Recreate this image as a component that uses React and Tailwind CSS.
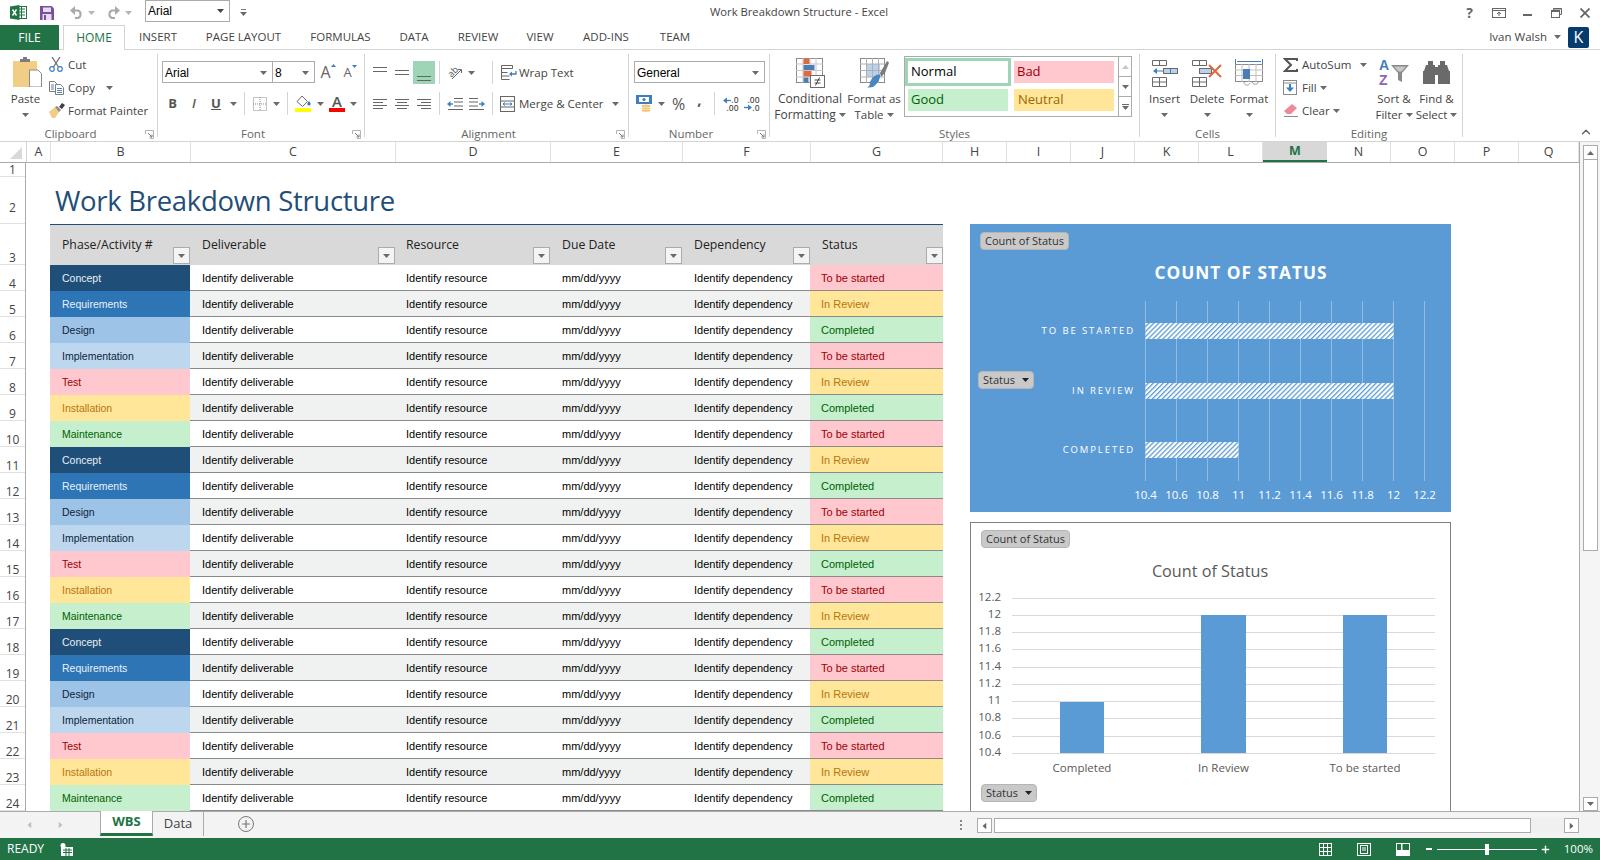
import { ChevronUp, Plus } from 'lucide-react';

const UI = "font-['Open_Sans',sans-serif]";
const ARIAL = "font-['Liberation_Sans',Arial,sans-serif]";

const COLUMNS = [
  { name: 'A', cls: 'w-[24px]' },
  { name: 'B', cls: 'w-[140px]' },
  { name: 'C', cls: 'w-[205px]' },
  { name: 'D', cls: 'w-[155px]' },
  { name: 'E', cls: 'w-[132px]' },
  { name: 'F', cls: 'w-[128px]' },
  { name: 'G', cls: 'w-[132px]' },
  { name: 'H', cls: 'w-[64px]' },
  { name: 'I', cls: 'w-[64px]' },
  { name: 'J', cls: 'w-[64px]' },
  { name: 'K', cls: 'w-[64px]' },
  { name: 'L', cls: 'w-[64px]' },
  { name: 'M', cls: 'w-[64px]', active: true },
  { name: 'N', cls: 'w-[64px]' },
  { name: 'O', cls: 'w-[64px]' },
  { name: 'P', cls: 'w-[64px]' },
  { name: 'Q', cls: 'w-[60px]' },
];

const PHASES = [
  { name: 'Concept', cls: 'bg-[#1f4e79] text-[#e8eef4]' },
  { name: 'Requirements', cls: 'bg-[#2e75b6] text-[#e8f0f8]' },
  { name: 'Design', cls: 'bg-[#9dc3e6] text-[#10243a]' },
  { name: 'Implementation', cls: 'bg-[#bdd7ee] text-[#10243a]' },
  { name: 'Test', cls: 'bg-[#ffc7ce] text-[#9c0006]' },
  { name: 'Installation', cls: 'bg-[#ffe699] text-[#b7750f]' },
  { name: 'Maintenance', cls: 'bg-[#c6efce] text-[#006100]' },
];

const STATUSES = [
  { name: 'To be started', cls: 'bg-[#ffc7ce] text-[#9c0006]' },
  { name: 'In Review', cls: 'bg-[#ffe699] text-[#b7750f]' },
  { name: 'Completed', cls: 'bg-[#c6efce] text-[#006100]' },
];

const HEADERS = [
  { name: 'Phase/Activity #', cls: 'pl-[12px]' },
  { name: 'Deliverable', cls: 'pl-[12px]' },
  { name: 'Resource', cls: 'pl-[11px]' },
  { name: 'Due Date', cls: 'pl-[12px]' },
  { name: 'Dependency', cls: 'pl-[12px]' },
  { name: 'Status', cls: 'pl-[12px]' },
];
const TABLE_GRID = 'grid grid-cols-[140px_205px_155px_132px_128px_133px]';

const ROW_NUMBERS = [
  { n: 1, cls: 'h-[14px]' },
  { n: 2, cls: 'h-[47px] pb-[9px]' },
  { n: 3, cls: 'h-[41px]' },
  ...Array.from({ length: 21 }, (_, i) => ({ n: i + 4, cls: 'h-[26px]' })),
];

const TABS = [
  { name: 'INSERT', cls: 'w-[66px]' },
  { name: 'PAGE LAYOUT', cls: 'w-[105px]' },
  { name: 'FORMULAS', cls: 'w-[89px]' },
  { name: 'DATA', cls: 'w-[58px]' },
  { name: 'REVIEW', cls: 'w-[70px]' },
  { name: 'VIEW', cls: 'w-[54px]' },
  { name: 'ADD-INS', cls: 'w-[78px]' },
  { name: 'TEAM', cls: 'w-[60px]' },
];

function Caret({ className = 'text-[#6a6a6a]' }) {
  return (
    <svg width="7" height="4" viewBox="0 0 7 4" className={className}>
      <path d="M0 0h7L3.5 4z" fill="currentColor" />
    </svg>
  );
}

function Slot({ cls, children }) {
  return <div className={`flex items-center justify-center h-full shrink-0 ${cls}`}>{children}</div>;
}

function VSep() {
  return <div className="w-px h-[23px] bg-[#d4d4d4]" />;
}

function Launcher() {
  return (
    <svg width="9" height="9" viewBox="0 0 9 9" fill="none" stroke="#7a7a7a">
      <path d="M.5 4V.5H8.5V8.5H5" stroke="#b5b5b5" />
      <path d="M3 3l4 4M7 4.5V7H4.5" />
    </svg>
  );
}

function Group({ cls, label, launcher, children }) {
  return (
    <div className={`flex flex-col h-[92px] shrink-0 ${cls}`}>
      <div className="h-[77px] shrink-0">{children}</div>
      <div className="flex items-center h-[14px]">
        <div className="flex-1 text-center text-[11.5px] leading-[14px] text-[#666]">{label}</div>
        {launcher && <div className="w-[16px] flex justify-center"><Launcher /></div>}
      </div>
    </div>
  );
}

function GroupSep() {
  return <div className="w-px h-[83px] mt-[4px] bg-[#d4d4d4] shrink-0" />;
}

function SmallBtn({ icon, label, caret, caretCls = 'ml-[5px]' }) {
  return (
    <div className="flex items-center h-[23px] text-[11.5px] text-[#444]">
      <div className="w-[19px] flex items-center">{icon}</div>
      <span>{label}</span>
      {caret && <span className={`flex ${caretCls}`}><Caret /></span>}
    </div>
  );
}

function BigBtn({ cls, icon, line1, line2, caret, text = 'text-[11.5px]' }) {
  return (
    <div className={`flex flex-col items-center pt-[8px] shrink-0 text-[#444] ${text} ${cls}`}>
      <div className="h-[30px] flex items-center justify-center">{icon}</div>
      <div className="mt-[3px] h-[16px] leading-[16px] whitespace-nowrap">{line1}</div>
      <div className="h-[16px] leading-[16px] whitespace-nowrap flex items-center gap-[3px]">
        {line2 && <span>{line2}</span>}
        {caret && <Caret />}
      </div>
    </div>
  );
}

function Combo({ cls, text }) {
  return (
    <div className={`flex items-center justify-between h-[22px] bg-white border border-[#ababab] pl-[2px] pr-[5px] pt-[1px] ${ARIAL} text-[12px] text-black ${cls}`}>
      <span>{text}</span>
      <Caret />
    </div>
  );
}

function Lines({ rows }) {
  return (
    <svg width="16" height="14" viewBox="0 0 16 14" stroke="#666" strokeWidth="1">
      {rows.map(([y, x1, x2]) => (
        <line key={y} x1={x1} x2={x2} y1={y + 0.5} y2={y + 0.5} />
      ))}
    </svg>
  );
}

// ---- title bar icons
function ExcelLogo() {
  return (
    <svg width="17" height="15" viewBox="0 0 17 15">
      <rect x="6" y="1.5" width="10.5" height="12" fill="#fff" stroke="#217346" />
      <path d="M9 4h6M9 7h6M9 10h6M11.5 2v11" stroke="#217346" />
      <path d="M0 1.5L9.5 0v15L0 13.5z" fill="#217346" />
      <path d="M2.5 4.5l4 6M6.5 4.5l-4 6" stroke="#fff" strokeWidth="1.4" />
    </svg>
  );
}

function SaveIcon() {
  return (
    <svg width="14" height="14" viewBox="0 0 14 14">
      <path d="M0 0h11.5L14 2.5V14H0z" fill="#7a4d9f" />
      <rect x="3" y="1.5" width="8" height="4.5" fill="#e6dcef" />
      <rect x="2.5" y="8" width="9" height="6" fill="#e6dcef" />
      <rect x="4" y="9" width="2" height="5" fill="#7a4d9f" />
    </svg>
  );
}

function UndoIcon({ flip }) {
  return (
    <svg width="15" height="13" viewBox="0 0 15 13" fill="none" className={flip ? '-scale-x-100' : ''}>
      <path d="M3 4.5h6a4 4 0 0 1 0 7.5H6" stroke="#a9a9a9" strokeWidth="2" />
      <path d="M6 0L1 4.5 6 9z" fill="#a9a9a9" />
    </svg>
  );
}

// ---- clipboard icons
function PasteIcon() {
  return (
    <svg width="29" height="30" viewBox="0 0 29 30">
      <rect x="0" y="4" width="24" height="26" fill="#f2cd86" />
      <path d="M7 5h10V2h-3V0h-4v2H7z" fill="#7d7d7d" />
      <path d="M16.5 13H25l3.5 3.5V30h-12z" fill="#fff" stroke="#8a8a8a" />
    </svg>
  );
}

function CutIcon() {
  return (
    <svg width="14" height="15" viewBox="0 0 14 15" fill="none">
      <path d="M3 0l6.5 10M11 0L4.5 10" stroke="#6f6f6f" strokeWidth="1.3" />
      <circle cx="3" cy="12" r="2.3" stroke="#3f7fbf" strokeWidth="1.2" />
      <circle cx="11" cy="12" r="2.3" stroke="#3f7fbf" strokeWidth="1.2" />
    </svg>
  );
}

function CopyIcon() {
  return (
    <svg width="15" height="14" viewBox="0 0 15 14" fill="#fff" stroke="#7d7d7d">
      <path d="M.5.5h5l2 2v8h-7z" />
      <path d="M6.5 3.5h5l3 3v7h-8z" />
      <path d="M8 7.5h5M8 9.5h5M8 11.5h5M2 4h3M2 6h3M2 8h3" stroke="#4a86c0" />
    </svg>
  );
}

function PainterIcon() {
  return (
    <svg width="16" height="15" viewBox="0 0 16 15">
      <path d="M0 9l6-5 4 5-4 6H3z" fill="#f2cd86" />
      <path d="M6 4l4 5 2-2-4-4z" fill="#8a8a8a" />
      <path d="M10 4l3-4 3 2-3 4z" fill="#3f3f3f" />
    </svg>
  );
}

// ---- font icons
function BorderIcon() {
  return (
    <svg width="14" height="14" viewBox="0 0 14 14" fill="none" stroke="#8a8a8a" strokeDasharray="1 1">
      <rect x=".5" y=".5" width="13" height="13" />
      <path d="M7 0v14M0 7h14" />
    </svg>
  );
}

function FillIcon() {
  return (
    <svg width="17" height="17" viewBox="0 0 17 17" fill="none">
      <path d="M7 1l5.5 5.5L7.5 11.5 2 6.5z" fill="#fff" stroke="#6a6a6a" />
      <path d="M14 6c1.2 1.6 1.6 2.4 1.6 3a1.6 1.6 0 0 1-3.2 0c0-.6.4-1.4 1.6-3z" fill="#2e75b6" />
      <rect x="0" y="13" width="16" height="4" fill="#ffff00" />
    </svg>
  );
}

function FontColorIcon() {
  return (
    <div className="flex flex-col items-center w-[16px]">
      <span className="text-[15px] leading-[13px] font-semibold text-[#555]">A</span>
      <div className="w-[16px] h-[4px] bg-[#ff0000]" />
    </div>
  );
}

function GrowFont({ small }) {
  return (
    <div className="flex items-start">
      <span className={small ? 'text-[13px] leading-[15px] text-[#666]' : 'text-[16px] leading-[16px] text-[#666]'}>A</span>
      <svg width="5" height="3" viewBox="0 0 5 3" className={small ? 'rotate-180' : ''}>
        <path d="M0 3h5L2.5 0z" fill="#3f7fbf" />
      </svg>
    </div>
  );
}

// ---- alignment icons
function OrientIcon() {
  return (
    <svg width="16" height="17" viewBox="0 0 16 17" className="overflow-visible">
      <text x="1" y="11" fontSize="9" fill="#555" fontFamily="Open Sans" transform="rotate(-45 6 8)">ab</text>
      <path d="M5 15L14 6M11 5.5h3.5V9" fill="none" stroke="#666" />
    </svg>
  );
}

function WrapIcon() {
  return (
    <svg width="16" height="16" viewBox="0 0 16 16" fill="none">
      <path d="M.5 .5h11v3h-11zM.5 3.5v11h8M.5 7.5h6M.5 11h8" stroke="#666" />
      <path d="M15 6v3H9" stroke="#3f7fbf" strokeWidth="1.3" />
      <path d="M11 6.5L8 9l3 2.5z" fill="#3f7fbf" />
    </svg>
  );
}

function MergeIcon() {
  return (
    <svg width="15" height="16" viewBox="0 0 15 16" fill="none" stroke="#666">
      <rect x=".5" y=".5" width="14" height="15" />
      <path d="M0 5h15M0 11h15" />
      <path d="M3 8h9M5 6.5L3 8l2 1.5M10 6.5L12 8l-2 1.5" stroke="#3f7fbf" />
    </svg>
  );
}

function IndentIcon({ flip }) {
  return (
    <svg width="16" height="12" viewBox="0 0 16 12" className={flip ? '-scale-x-100' : ''}>
      <path d="M7 .5h9M7 4h9M7 8h9M1 11.5h15" stroke="#666" />
      <path d="M1 6h5" stroke="#3f7fbf" strokeWidth="1.4" />
      <path d="M3.5 3L0 6l3.5 3z" fill="#3f7fbf" />
    </svg>
  );
}

// ---- number icons
function AccountingIcon() {
  return (
    <svg width="17" height="17" viewBox="0 0 17 17">
      <rect x="0" y="0" width="16" height="9" fill="#3f7fbf" />
      <rect x="3" y="2" width="10" height="5" fill="#fff" />
      <circle cx="8" cy="4.5" r="1.6" fill="#3f7fbf" />
      <ellipse cx="10" cy="11" rx="4.5" ry="1.6" fill="#f2c46d" />
      <ellipse cx="10" cy="13.5" rx="4.5" ry="1.6" fill="#f2c46d" stroke="#fff" strokeWidth=".5" />
      <ellipse cx="10" cy="15.5" rx="4.5" ry="1.5" fill="#f2c46d" stroke="#fff" strokeWidth=".5" />
    </svg>
  );
}

function DecimalIcon({ inc }) {
  return (
    <div className="relative w-[16px] h-[16px] text-[8.5px] leading-[8px] text-[#555] text-right font-semibold">
      <div>{inc ? '.0' : '.00'}</div>
      <div>{inc ? '.00' : '.0'}</div>
      <svg width="8" height="7" viewBox="0 0 8 7" className={`absolute left-0 ${inc ? 'top-[1px]' : 'top-[8px] -scale-x-100'}`}>
        <path d="M1 3.5h7" stroke="#3f7fbf" strokeWidth="1.3" />
        <path d="M4 .5L0 3.5l4 3z" fill="#3f7fbf" />
      </svg>
    </div>
  );
}

// ---- styles icons
function CondFormatIcon() {
  return (
    <svg width="29" height="30" viewBox="0 0 29 30" fill="none">
      <rect x=".5" y=".5" width="26" height="24" fill="#fff" stroke="#8a8a8a" />
      <path d="M7 0v25M14 0v25M20 0v25M0 6h27M0 12.5h27M0 19h27" stroke="#c6c6c6" />
      <rect x="7.5" y="1" width="6" height="5" fill="#e0683a" />
      <rect x="7.5" y="7" width="11" height="5" fill="#4a7db5" />
      <rect x="7.5" y="13" width="8" height="5.5" fill="#e0683a" />
      <rect x="7.5" y="19.5" width="5" height="5" fill="#4a7db5" />
      <rect x="14.5" y="17.5" width="14" height="12" fill="#fff" stroke="#6a6a6a" />
      <path d="M18.5 22h6M18.5 25h6M23.5 19.5l-4 8" stroke="#444" />
    </svg>
  );
}

function FormatTableIcon() {
  return (
    <svg width="29" height="30" viewBox="0 0 29 30" fill="none">
      <rect x=".5" y=".5" width="24" height="24" fill="#fff" stroke="#8a8a8a" />
      <rect x="7" y="6" width="13" height="13" fill="#b9d1ea" />
      <path d="M6.5 0v25M12.5 0v25M18.5 0v25M0 6h25M0 12.5h25M0 19h25" stroke="#b0b0b0" />
      <path d="M20 15L27 3l2 1.5L25 15l-4 4z" fill="#7a7a7a" />
      <path d="M10 24c2-5 6-8 10-7.5 1 3-2 8-5 11-2 2-5 2-8 2 2-1 3-2 3-5.5z" fill="#4a86c0" />
    </svg>
  );
}

function InsertIcon() {
  return (
    <svg width="26" height="27" viewBox="0 0 26 27" fill="none">
      <path d="M.5.5h14v5H.5zM7.5.5v5M.5 17.5h14v9H.5zM.5 22h14M7.5 17.5v9" stroke="#6a6a6a" />
      <rect x="11.5" y="8.5" width="14" height="5" fill="#b9d1ea" stroke="#6a6a6a" />
      <path d="M18.5 8.5v5M4 11h7" stroke="#3f7fbf" />
      <path d="M5 8L1 11l4 3z" fill="#3f7fbf" />
    </svg>
  );
}

function DeleteIcon() {
  return (
    <svg width="30" height="27" viewBox="0 0 30 27" fill="none">
      <path d="M.5.5h14v5H.5zM7.5.5v5M.5 17.5h14v9H.5zM.5 22h14M7.5 17.5v9" stroke="#6a6a6a" />
      <rect x="7.5" y="8.5" width="12" height="5" fill="#b9d1ea" stroke="#6a6a6a" />
      <path d="M17 5l12 12M29 5L17 17" stroke="#e0683a" strokeWidth="2" />
    </svg>
  );
}

function FormatCellIcon() {
  return (
    <svg width="28" height="28" viewBox="0 0 28 28" fill="none">
      <path d="M.5 0v5M27.5 0v5M2 2.5h24" stroke="#3f7fbf" />
      <rect x=".5" y="5.5" width="27" height="17" fill="#fff" stroke="#8a8a8a" />
      <path d="M7 5v18M14 5v18M21 5v18M0 11h28M0 16.5h28" stroke="#c0c0c0" />
      <rect x="8" y="10" width="7" height="10" fill="#4a7db5" />
      <path d="M9 23c0 4 5 4 6 1M17 23c1 3 6 3 6 0" stroke="#9a9a9a" />
    </svg>
  );
}

// ---- editing icons
function SumIcon() {
  return (
    <svg width="15" height="14" viewBox="0 0 15 14" fill="none">
      <path d="M14 3V1H2l6 6-6 6h12v-2" stroke="#555" strokeWidth="2" />
    </svg>
  );
}

function FillDownIcon() {
  return (
    <svg width="14" height="15" viewBox="0 0 14 15" fill="none">
      <rect x=".5" y=".5" width="13" height="14" fill="#fff" stroke="#8a8a8a" />
      <path d="M0 3h14" stroke="#8a8a8a" />
      <path d="M7 4v7" stroke="#3f7fbf" strokeWidth="2" />
      <path d="M3 7.5L7 12l4-4.5z" fill="#3f7fbf" />
    </svg>
  );
}

function EraserIcon() {
  return (
    <svg width="15" height="13" viewBox="0 0 15 13">
      <path d="M9 0l5 4-6 6H4L1 7z" fill="#ec8a9a" />
      <path d="M1 12.5h14" stroke="#8a8a8a" />
    </svg>
  );
}

function SortIcon() {
  return (
    <div className={`flex items-center ${ARIAL}`}>
      <div className="flex flex-col w-[12px] text-[14px] leading-[15px] font-bold">
        <span className="text-[#3f7fbf]">A</span>
        <span className="text-[#8f63b5]">Z</span>
      </div>
      <svg width="18" height="18" viewBox="0 0 18 18">
        <path d="M0 1h18l-7 8v9l-4-2V9z" fill="#8a8a8a" />
        <path d="M3 2.5h12l-4.5 5h-3z" fill="#c8c8c8" />
      </svg>
    </div>
  );
}

function FindIcon() {
  return (
    <svg width="27" height="24" viewBox="0 0 27 24" fill="#6a6a6a">
      <path d="M5 0h5v4h2v6H1L3 4h2z" />
      <path d="M17 0h5v4h2l2 6H15V4h2z" />
      <path d="M0 10h12v13H0zM15 10h12v13H15z" />
      <rect x="12" y="6" width="3" height="8" />
    </svg>
  );
}

// ---- ribbon
function Ribbon() {
  return (
    <div className="flex h-[92px] bg-white border-b border-[#d4d4d4]">
      <Group cls="w-[157px]" label="Clipboard" launcher>
        <div className="flex pt-[3px]">
          <div className="w-[49px] shrink-0 flex flex-col items-center pl-[2px]">
            <div className="h-[34px] pt-[4px] pl-[4px]"><PasteIcon /></div>
            <div className="mt-[4px] text-[11.5px] leading-[16px] text-[#444]">Paste</div>
            <div className="mt-[6px] flex"><Caret /></div>
          </div>
          <div>
            <SmallBtn icon={<CutIcon />} label="Cut" />
            <SmallBtn icon={<CopyIcon />} label="Copy" caret caretCls="ml-[11px]" />
            <SmallBtn icon={<PainterIcon />} label="Format Painter" />
          </div>
        </div>
      </Group>
      <GroupSep />
      <Group cls="w-[206px]" label="Font" launcher>
        <div className="pt-[11px] pl-[4px]">
          <div className="flex items-center">
            <Combo cls="w-[111px]" text="Arial" />
            <Combo cls="w-[43px] ml-[-1px]" text="8" />
            <Slot cls="w-[24px] ml-[1px] h-[22px]"><GrowFont /></Slot>
            <Slot cls="w-[20px] h-[22px]"><GrowFont small /></Slot>
          </div>
          <div className="flex items-center h-[23px] mt-[9px] text-[13px] text-[#555] font-bold">
            <Slot cls="w-[21px]">B</Slot>
            <Slot cls="w-[22px]"><span className="italic font-semibold">I</span></Slot>
            <Slot cls="w-[22px]"><span className="underline">U</span></Slot>
            <Slot cls="w-[12px]"><Caret /></Slot>
            <Slot cls="w-[11px]"><VSep /></Slot>
            <Slot cls="w-[20px]"><BorderIcon /></Slot>
            <Slot cls="w-[12px]"><Caret /></Slot>
            <Slot cls="w-[11px]"><VSep /></Slot>
            <Slot cls="w-[20px]"><FillIcon /></Slot>
            <Slot cls="w-[14px]"><Caret /></Slot>
            <Slot cls="w-[20px]"><FontColorIcon /></Slot>
            <Slot cls="w-[13px]"><Caret /></Slot>
          </div>
        </div>
      </Group>
      <GroupSep />
      <Group cls="w-[263px]" label="Alignment" launcher>
        <div className="pt-[11px] pl-[4px]">
          <div className="flex items-center h-[23px] text-[11.5px] text-[#444]">
            <Slot cls="w-[22px]"><Lines rows={[[1, 1, 15], [5, 1, 15]]} /></Slot>
            <Slot cls="w-[22px]"><Lines rows={[[4, 1, 15], [8, 1, 15]]} /></Slot>
            <Slot cls="w-[22px] bg-[#9fd5b7]"><div className="pt-[4px]"><Lines rows={[[8, 1, 15], [12, 1, 15]]} /></div></Slot>
            <Slot cls="w-[8px]"><VSep /></Slot>
            <Slot cls="w-[24px]"><OrientIcon /></Slot>
            <Slot cls="w-[8px]"><Caret /></Slot>
            <Slot cls="w-[23px] pl-[12px]"><VSep /></Slot>
            <Slot cls="w-[21px]"><WrapIcon /></Slot>
            <span>Wrap Text</span>
          </div>
          <div className="flex items-center h-[23px] mt-[8px] text-[11.5px] text-[#444]">
            <Slot cls="w-[22px]"><Lines rows={[[2, 1, 15], [5, 1, 11], [8, 1, 15], [11, 1, 11]]} /></Slot>
            <Slot cls="w-[22px]"><Lines rows={[[2, 1, 15], [5, 3, 13], [8, 1, 15], [11, 3, 13]]} /></Slot>
            <Slot cls="w-[22px]"><Lines rows={[[2, 1, 15], [5, 5, 15], [8, 1, 15], [11, 5, 15]]} /></Slot>
            <Slot cls="w-[9px]"><VSep /></Slot>
            <Slot cls="w-[22px]"><IndentIcon /></Slot>
            <Slot cls="w-[22px]"><IndentIcon flip /></Slot>
            <Slot cls="w-[9px]"><VSep /></Slot>
            <Slot cls="w-[20px]"><MergeIcon /></Slot>
            <span className="ml-[2px] whitespace-nowrap">Merge &amp; Center</span>
            <span className="flex ml-[8px]"><Caret /></span>
          </div>
        </div>
      </Group>
      <GroupSep />
      <Group cls="w-[140px]" label="Number" launcher>
        <div className="pt-[11px] pl-[5px]">
          <Combo cls="w-[131px]" text="General" />
          <div className="flex items-center h-[23px] mt-[9px] text-[#555]">
            <Slot cls="w-[21px]"><AccountingIcon /></Slot>
            <Slot cls="w-[12px]"><Caret /></Slot>
            <Slot cls="w-[23px] text-[16px]">%</Slot>
            <Slot cls="w-[19px] text-[15px] font-bold"><span className="mt-[-8px]">,</span></Slot>
            <Slot cls="w-[11px]"><VSep /></Slot>
            <Slot cls="w-[21px]"><DecimalIcon inc /></Slot>
            <Slot cls="w-[21px]"><DecimalIcon /></Slot>
          </div>
        </div>
      </Group>
      <GroupSep />
      <Group cls="w-[369px]" label="Styles">
        <div className="flex">
          <BigBtn cls="w-[68px] ml-[6px]" text="text-[12px]" icon={<CondFormatIcon />} line1="Conditional" line2="Formatting" caret />
          <BigBtn cls="w-[60px]" icon={<FormatTableIcon />} line1="Format as" line2="Table" caret />
          <div className="flex mt-[6px] w-[228px] h-[61px] border border-[#ababab]">
            <div className="w-[212px] shrink-0 text-[13px]">
              <div className="flex items-center mt-[1px]">
                <div className="flex items-center w-[106px] h-[28px] border-[3px] border-[#9fd5b7] pl-[3px] text-black">Normal</div>
                <div className="flex items-center w-[100px] h-[22px] ml-[3px] pl-[3px] bg-[#ffc7ce] text-[#9c0006]">Bad</div>
              </div>
              <div className="flex items-center mt-[3px]">
                <div className="flex items-center w-[100px] h-[22px] ml-[3px] pl-[3px] bg-[#c6efce] text-[#006100]">Good</div>
                <div className="flex items-center w-[100px] h-[22px] ml-[6px] pl-[4px] bg-[#ffe699] text-[#9c6500]">Neutral</div>
              </div>
            </div>
            <div className="flex-1 ml-[1px] flex flex-col border-l border-[#ababab]">
              <div className="h-[20px] flex items-center justify-center border-b border-[#ababab]"><Caret className="text-[#c6c6c6] rotate-180" /></div>
              <div className="h-[20px] flex items-center justify-center border-b border-[#ababab]"><Caret /></div>
              <div className="flex-1 flex flex-col items-center justify-center gap-[1px]"><div className="w-[7px] h-px bg-[#6a6a6a]" /><Caret /></div>
            </div>
          </div>
        </div>
      </Group>
      <GroupSep />
      <Group cls="w-[135px]" label="Cells">
        <div className="flex pl-[3px]">
          <BigBtn cls="w-[43px]" icon={<InsertIcon />} line1="Insert" caret />
          <BigBtn cls="w-[42px]" icon={<DeleteIcon />} line1="Delete" caret />
          <BigBtn cls="w-[42px]" icon={<FormatCellIcon />} line1="Format" caret />
        </div>
      </Group>
      <GroupSep />
      <Group cls="w-[186px]" label="Editing">
        <div className="flex">
          <div className="w-[95px] pl-[7px] pt-[3px] shrink-0">
            <SmallBtn icon={<SumIcon />} label="AutoSum" caret caretCls="ml-[9px]" />
            <SmallBtn icon={<FillDownIcon />} label="Fill" caret caretCls="ml-[3px]" />
            <SmallBtn icon={<EraserIcon />} label="Clear" caret caretCls="ml-[3px]" />
          </div>
          <BigBtn cls="w-[46px]" icon={<SortIcon />} line1="Sort &" line2="Filter" caret />
          <BigBtn cls="w-[39px]" icon={<FindIcon />} line1="Find &" line2="Select" caret />
        </div>
      </Group>
      <GroupSep />
      <div className="flex-1 flex items-end justify-end pr-[7px] pb-[2px]">
        <ChevronUp size={14} strokeWidth={2.4} className="text-[#666]" />
      </div>
    </div>
  );
}

function TitleBar() {
  return (
    <div className="flex items-center h-[25px] bg-white text-[#444]">
      <div className="flex items-center w-[145px] shrink-0 h-full">
        <div className="ml-[10px]"><ExcelLogo /></div>
        <div className="ml-[13px]"><SaveIcon /></div>
        <div className="ml-[15px]"><UndoIcon /></div>
        <div className="ml-[4px]"><Caret className="text-[#b5b5b5]" /></div>
        <div className="ml-[11px]"><UndoIcon flip /></div>
        <div className="ml-[4px]"><Caret className="text-[#b5b5b5]" /></div>
      </div>
      <div className={`self-start flex items-center justify-between w-[85px] h-[22px] bg-white border border-[#ababab] pl-[2px] pr-[5px] ${ARIAL} text-[12px] text-black`}>
        <span>Arial</span>
        <Caret className="text-[#444]" />
      </div>
      <div className="ml-[10px] flex flex-col items-center gap-[2px]">
        <div className="w-[5px] h-px bg-[#777]" />
        <Caret />
      </div>
      <div className="flex-1 text-center text-[11.25px] pl-[200px]">
        <span className="ml-[-152px] mr-[152px]">Work Breakdown Structure - Excel</span>
      </div>
      <div className="flex items-center shrink-0 text-[#666]">
        <span className="w-[29px] text-center text-[14px] font-bold">?</span>
        <Slot cls="w-[29px]">
          <svg width="14" height="10" viewBox="0 0 14 10" fill="none" stroke="#666"><rect x=".5" y=".5" width="13" height="9" /><path d="M0 2.5h14" /><path d="M7 8V4M5 6l2-2 2 2" /></svg>
        </Slot>
        <Slot cls="w-[29px]"><div className="w-[9px] h-[2px] mt-[4px] bg-[#666]" /></Slot>
        <Slot cls="w-[29px]">
          <svg width="11" height="10" viewBox="0 0 11 10" fill="none" stroke="#666"><path d="M2.5 2.5V.5h8v6H8" /><rect x=".5" y="2.5" width="8" height="7" /><path d="M2.5 1h8M.5 3.5h8" /></svg>
        </Slot>
        <Slot cls="w-[29px] pr-[1px]">
          <svg width="10" height="10" viewBox="0 0 10 10" stroke="#666" strokeWidth="1.8"><path d="M.5.5l9 9M9.5.5l-9 9" /></svg>
        </Slot>
      </div>
    </div>
  );
}

function TabsRow() {
  return (
    <div className="flex items-stretch h-[25px] bg-white border-b border-[#d4d4d4] text-[11.5px] text-[#444]">
      <div className="flex items-center justify-center w-[59px] h-[25px] bg-[#217346] text-white text-[12px]">FILE</div>
      <div className="flex items-center justify-center w-[62px] h-[25px] ml-[4px] bg-white border border-b-0 border-[#d4d4d4] text-[#217346] text-[12px]">HOME</div>
      {TABS.map((t) => (
        <div key={t.name} className={`flex items-center justify-center ${t.cls}`}>{t.name}</div>
      ))}
      <div className="flex-1 flex items-center justify-end">
        <span>Ivan Walsh</span>
        <span className="flex ml-[7px]"><Caret /></span>
        <div className="flex items-center justify-center w-[21px] h-[21px] ml-[7px] mr-[11px] rounded-[2px] bg-[#063b6e] text-white text-[16px]">K</div>
      </div>
    </div>
  );
}

function ColumnHeaders() {
  return (
    <div className="flex h-[21px] shrink-0 bg-white border-b border-[#ababab]">
      <div className="w-[27px] flex items-end justify-end pr-[4px] pb-[3px] border-r border-[#d4d4d4]">
        <div className="w-0 h-0 border-l-[12px] border-l-transparent border-b-[12px] border-b-[#d9d9d9]" />
      </div>
      {COLUMNS.map((c) =>
        c.active ? (
          <div key={c.name} className={`flex items-center justify-center bg-[#d8d8d8] border-b-2 border-[#217346] text-[#217346] font-bold text-[12.5px] ${c.cls}`}>{c.name}</div>
        ) : (
          <div key={c.name} className={`flex items-center justify-center border-r border-[#e1e1e1] text-[#444] text-[12.5px] ${c.cls}`}>{c.name}</div>
        )
      )}
    </div>
  );
}

function FilterButton() {
  return (
    <div className="absolute right-0 bottom-[1px] flex items-center justify-center w-[17px] h-[17px] bg-[#f4f4f4] border border-[#ababab]">
      <Caret />
    </div>
  );
}

function WbsTable() {
  return (
    <div className={`${ARIAL} text-[11px] w-[893px] border-t border-[#1f4e79]`}>
      <div className={`${TABLE_GRID} h-[40px] bg-[#d9d9d9] ${UI} text-[12.25px] text-[#222]`}>
        {HEADERS.map((h) => (
          <div key={h.name} className={`relative flex items-center pt-[1px] ${h.cls}`}>
            {h.name}
            <FilterButton />
          </div>
        ))}
      </div>
      {Array.from({ length: 21 }, (_, i) => {
        const phase = PHASES[i % 7];
        const status = STATUSES[i % 3];
        const even = i % 2 === 1;
        return (
          <div key={i} className={`${TABLE_GRID} h-[26px] ${even ? 'bg-[#f0f2f1]' : 'bg-white'} text-black`}>
            <div className={`flex items-center pl-[12px] pt-[1px] text-[10.5px] ${phase.cls}`}>{phase.name}</div>
            <div className="flex items-center pl-[12px] pt-[1px] border-b border-[#8a8a8a]">Identify deliverable</div>
            <div className="flex items-center pl-[11px] pt-[1px] border-b border-[#8a8a8a]">Identify resource</div>
            <div className="flex items-center pl-[12px] pt-[1px] border-b border-[#8a8a8a]">mm/dd/yyyy</div>
            <div className="flex items-center pl-[12px] pt-[1px] border-b border-[#8a8a8a]">Identify dependency</div>
            <div className={`flex items-center pl-[11px] pt-[1px] border-b border-[#8a8a8a] ${status.cls}`}>{status.name}</div>
          </div>
        );
      })}
    </div>
  );
}

function Pill({ cls, children }) {
  return (
    <div className={`absolute flex items-center justify-between h-[18px] px-[4px] rounded-[4px] bg-[#c9c9c9] border border-[#b5b5b5] text-[11px] text-[#333] whitespace-nowrap ${cls}`}>
      {children}
    </div>
  );
}

function BarChartHorizontal() {
  const ticks = ['10.4', '10.6', '10.8', '11', '11.2', '11.4', '11.6', '11.8', '12', '12.2'];
  const bars = [
    { label: 'TO BE STARTED', y: 99, w: 248 },
    { label: 'IN REVIEW', y: 159, w: 248 },
    { label: 'COMPLETED', y: 218, w: 93 },
  ];
  return (
    <div className="relative w-[481px] h-[288px] bg-[#5b9bd5]">
      <svg width="481" height="288" viewBox="0 0 481 288" fontFamily="Open Sans" fill="#fff">
        <defs>
          <pattern id="hatch" width="3.5" height="3.5" patternUnits="userSpaceOnUse" patternTransform="rotate(45)">
            <rect width="3.5" height="3.5" fill="#fff" />
            <rect width="1.3" height="3.5" fill="#5b9bd5" />
          </pattern>
        </defs>
        <text x="271" y="55" textAnchor="middle" fontSize="17.25" fontWeight="700" letterSpacing="1">COUNT OF STATUS</text>
        {ticks.map((t, i) => (
          <g key={t}>
            <line x1={175.5 + i * 31} x2={175.5 + i * 31} y1="77" y2="257" stroke="#8fbce5" />
            <text x={175.5 + i * 31} y="275" textAnchor="middle" fontSize="11.5">{t}</text>
          </g>
        ))}
        {bars.map((b) => (
          <g key={b.label}>
            <rect x="175.5" y={b.y} width={b.w} height="16" fill="url(#hatch)" />
            <text x="165" y={b.y + 11} textAnchor="end" fontSize="9.5" letterSpacing="1.9">{b.label}</text>
          </g>
        ))}
      </svg>
      <Pill cls="left-[10px] top-[8px] w-[89px]">Count of Status</Pill>
      <Pill cls="left-[8px] top-[147px] w-[56px]">Status<Caret className="text-[#222]" /></Pill>
    </div>
  );
}

function BarChartVertical() {
  const ticks = [
    ['12.2', 75.5], ['12', 92.5], ['11.8', 109.5], ['11.6', 126.5], ['11.4', 144.5],
    ['11.2', 161.5], ['11', 178.5], ['10.8', 195.5], ['10.6', 213.5], ['10.4', 230.5],
  ];
  const bars = [
    { label: 'Completed', x: 89, w: 44, y: 179, cx: 111 },
    { label: 'In Review', x: 230, w: 45, y: 92, cx: 252.5 },
    { label: 'To be started', x: 372, w: 44, y: 92, cx: 394 },
  ];
  return (
    <div className="relative w-[481px] h-[300px] mt-[10px] bg-white border border-[#7f7f7f]">
      <svg width="479" height="298" viewBox="0 0 479 298" fontFamily="Open Sans" className="absolute left-0 top-0">
        <text x="239" y="54" textAnchor="middle" fontSize="16.2" fill="#595959">Count of Status</text>
        {ticks.map(([t, y]) => (
          <g key={t}>
            <line x1="41" x2="464" y1={y} y2={y} stroke="#d9d9d9" />
            <text x="30" y={y + 2} textAnchor="end" fontSize="11.5" fill="#595959">{t}</text>
          </g>
        ))}
        {bars.map((b) => (
          <g key={b.label}>
            <rect x={b.x} y={b.y} width={b.w} height={230 - b.y} fill="#5b9bd5" />
            <text x={b.cx} y="249" textAnchor="middle" fontSize="11.5" fill="#595959">{b.label}</text>
          </g>
        ))}
      </svg>
      <Pill cls="left-[10px] top-[7px] w-[89px]">Count of Status</Pill>
      <Pill cls="left-[10px] top-[261px] w-[56px]">Status<Caret className="text-[#222]" /></Pill>
    </div>
  );
}

function VScrollbar() {
  return (
    <div className="w-[21px] shrink-0 flex flex-col bg-[#f5f5f5] pt-[3px] pl-[3px] border-l border-[#ababab]">
      <div className="flex items-center justify-center w-[15px] h-[15px] bg-white border border-[#ababab]"><Caret className="text-[#6a6a6a] rotate-180" /></div>
      <div className="w-[15px] h-[391px] bg-white border-x border-b border-[#ababab]" />
      <div className="flex-1" />
      <div className="flex items-center justify-center w-[15px] h-[14px] bg-white border border-[#ababab]"><Caret /></div>
    </div>
  );
}

function Sheet() {
  return (
    <div className="flex h-[648px] overflow-hidden bg-white">
      <div className="w-[26px] shrink-0 border-r border-[#ababab]">
        {ROW_NUMBERS.map((r) => (
          <div key={r.n} className={`flex items-end justify-center border-b border-[#e1e1e1] text-[12px] leading-[13px] text-[#444] ${r.cls}`}>{r.n}</div>
        ))}
      </div>
      <div className="flex flex-1 pl-[24px] min-w-0">
        <div className="w-[893px] shrink-0">
          <div className="h-[61px] flex items-end pl-[5px] pb-[3px] text-[27.5px] tracking-[-0.3px] leading-[40px] text-[#1f4e79] whitespace-nowrap">Work Breakdown Structure</div>
          <WbsTable />
        </div>
        <div className="ml-[27px] mt-[61px]">
          <BarChartHorizontal />
          <BarChartVertical />
        </div>
      </div>
    </div>
  );
}

function SheetTabs() {
  return (
    <div className="flex items-start h-[27px] bg-[#f3f3f3] border-t border-[#ababab] text-[#666]">
      <div className="flex items-center h-[25px] w-[100px] pl-[26px] gap-[24px]">
        <Caret className="text-[#c0c0c0] rotate-90" />
        <Caret className="text-[#c0c0c0] -rotate-90" />
      </div>
      <div className="flex items-center justify-center w-[53px] h-[25px] mt-[-1px] bg-white border-x border-[#ababab] border-b-[3px] border-b-[#217346] text-[13px] font-bold text-[#217346]">WBS</div>
      <div className="flex items-center justify-center w-[51px] h-[24px] border-r border-[#ababab] text-[13px] text-[#444]">Data</div>
      <div className="flex items-center justify-center w-[16px] h-[16px] ml-[34px] mt-[4px] rounded-full border border-[#777]">
        <Plus size={12} strokeWidth={2.4} className="text-[#777]" />
      </div>
      <div className="flex-1" />
      <div className="flex flex-col gap-[2px] mt-[8px] mr-[15px]">
        <div className="w-[2px] h-[2px] bg-[#888]" />
        <div className="w-[2px] h-[2px] bg-[#888]" />
        <div className="w-[2px] h-[2px] bg-[#888]" />
      </div>
      <div className="flex w-[602px] h-[15px] mt-[6px] mr-[21px]">
        <div className="flex items-center justify-center w-[15px] bg-white border border-[#ababab]"><Caret className="rotate-90" /></div>
        <div className="w-[537px] ml-[2px] bg-white border border-[#ababab]" />
        <div className="flex-1 bg-[#f0f0f0]" />
        <div className="flex items-center justify-center w-[15px] bg-white border border-[#ababab]"><Caret className="-rotate-90" /></div>
      </div>
    </div>
  );
}

function StatusBar() {
  return (
    <div className="flex items-center h-[22px] bg-[#217346] text-white text-[12px]">
      <span className="ml-[7px] w-[53px]">READY</span>
      <svg width="13" height="13" viewBox="0 0 13 13">
        <rect x="1" y="4" width="12" height="9" fill="#fff" />
        <circle cx="3" cy="2.5" r="2.5" fill="#fff" />
        <path d="M3 7h9M3 9.5h9M6 5v8M9 5v8" stroke="#217346" />
      </svg>
      <div className="flex-1" />
      <svg width="13" height="13" viewBox="0 0 13 13" fill="none" stroke="#fff" className="mr-[25px]">
        <rect x=".5" y=".5" width="12" height="12" />
        <path d="M4.5 0v13M8.5 0v13M0 4.5h13M0 8.5h13" />
      </svg>
      <svg width="14" height="13" viewBox="0 0 14 13" fill="none" stroke="#fff" className="mr-[25px]">
        <rect x=".5" y=".5" width="13" height="12" />
        <rect x="3.5" y="2.5" width="7" height="8" />
        <path d="M5 5h4M5 7h4" />
      </svg>
      <svg width="14" height="13" viewBox="0 0 14 13" className="mr-[16px]">
        <rect x=".5" y=".5" width="13" height="12" fill="none" stroke="#fff" />
        <rect x="1" y="7" width="12" height="5" fill="#fff" />
        <rect x="5" y="1" width="1.5" height="6" fill="#fff" />
      </svg>
      <div className="w-[6px] h-[2px] bg-white" />
      <div className="flex items-center ml-[5px] w-[100px] h-px bg-white justify-center">
        <div className="w-[4px] h-[11px] bg-white" />
      </div>
      <Plus size={11} strokeWidth={3} className="ml-[3px] mr-[13px]" />
      <span className="mr-[7px] text-[11.5px]">100%</span>
    </div>
  );
}

export default function App() {
  return (
    <div className={`w-[1600px] h-[860px] overflow-hidden bg-white ${UI}`}>
      <TitleBar />
      <TabsRow />
      <Ribbon />
      <div className="flex h-[669px]">
        <div className="flex-1 min-w-0 flex flex-col">
          <ColumnHeaders />
          <Sheet />
        </div>
        <VScrollbar />
      </div>
      <SheetTabs />
      <StatusBar />
    </div>
  );
}
